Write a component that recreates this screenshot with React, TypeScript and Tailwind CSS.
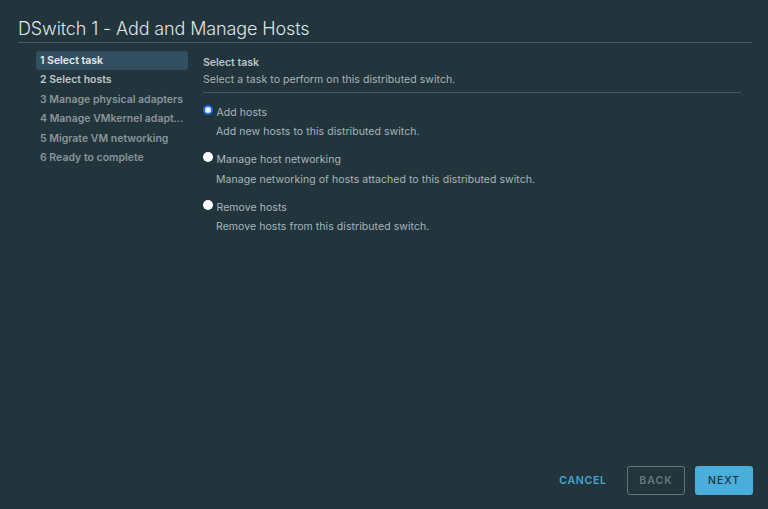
import React from 'react';

const steps = [
  { label: '1 Select task', active: true },
  { label: '2 Select hosts', enabled: true },
  { label: '3 Manage physical adapters' },
  { label: '4 Manage VMkernel adapters' },
  { label: '5 Migrate VM networking' },
  { label: '6 Ready to complete' },
];

const options = [
  { title: 'Add hosts', text: 'Add new hosts to this distributed switch.', checked: true },
  { title: 'Manage host networking', text: 'Manage networking of hosts attached to this distributed switch.' },
  { title: 'Remove hosts', text: 'Remove hosts from this distributed switch.' },
];

export default function App() {
  return (
    <div className="h-[509px] w-[768px] overflow-hidden bg-[#22343c] font-['Inter',sans-serif] flex flex-col">
      <header className="ml-[18px] mr-4 h-[25px] mt-[18px] border-b border-[#485b62]">
        <h1 className="text-[18px] leading-[22px] font-light tracking-[-0.12px] text-[#dfe5e8]">DSwitch 1 - Add and Manage Hosts</h1>
      </header>

      <div className="flex flex-1 min-h-0 pt-[8px]">
        <nav className="ml-9 w-[152px] flex flex-col">
          {steps.map((s) => (
            <div
              key={s.label}
              className={
                'h-[19.4px] pl-[4px] rounded-[3px] text-[10.5px] leading-[19.4px] font-semibold truncate ' +
                (s.active ? 'bg-[#324f61] text-[#e6ebee]' : s.enabled ? 'text-[#bcc5c9]' : 'text-[#8a959a]')
              }
            >
              {s.label}
            </div>
          ))}
        </nav>

        <main className="ml-[15px] w-[538px]">
          <h2 className="mt-[5px] text-[10.5px] leading-[14px] font-semibold text-[#bcc5c9]">Select task</h2>
          <p className="mt-[3px] text-[10.5px] leading-[14px] tracking-[0.06px] text-[#a9b4b9]">Select a task to perform on this distributed switch.</p>
          <div className="mt-[5px] border-t border-[#485b62]" />

          <div className="mt-[13px] flex flex-col gap-[14.3px]">
            {options.map((o) => (
              <div key={o.title}>
                <label className="flex items-start h-[14px]">
                  <span
                    className={
                      'mt-[-1px] size-[10px] shrink-0 rounded-full ' +
                      (o.checked ? 'border-[2px] border-[#1b6fe8] bg-[#e9eef2]' : 'bg-white')
                    }
                  />
                  <span className="ml-[3.5px] text-[10.5px] leading-[14px] tracking-[0.06px] text-[#adb7bc]">{o.title}</span>
                </label>
                <p className="mt-[5.2px] ml-[13px] text-[10.5px] leading-[14px] tracking-[0.06px] text-[#a9b4b9]">{o.text}</p>
              </div>
            ))}
          </div>
        </main>
      </div>

      <footer className="flex justify-end items-center gap-[10px] mr-[15px] mb-[14px]">
        <button className="w-[68px] h-[29px] text-[10.5px] font-semibold tracking-[0.7px] text-[#49a6cf]">CANCEL</button>
        <button className="w-[58px] h-[29px] rounded-[3px] border border-[#657378] text-[10.5px] font-semibold tracking-[1px] text-[#6a787e]">BACK</button>
        <button className="w-[58px] h-[29px] rounded-[3px] bg-[#49aed9] text-[10.5px] font-medium tracking-[1px] text-[#1d3340]">NEXT</button>
      </footer>
    </div>
  );
}
